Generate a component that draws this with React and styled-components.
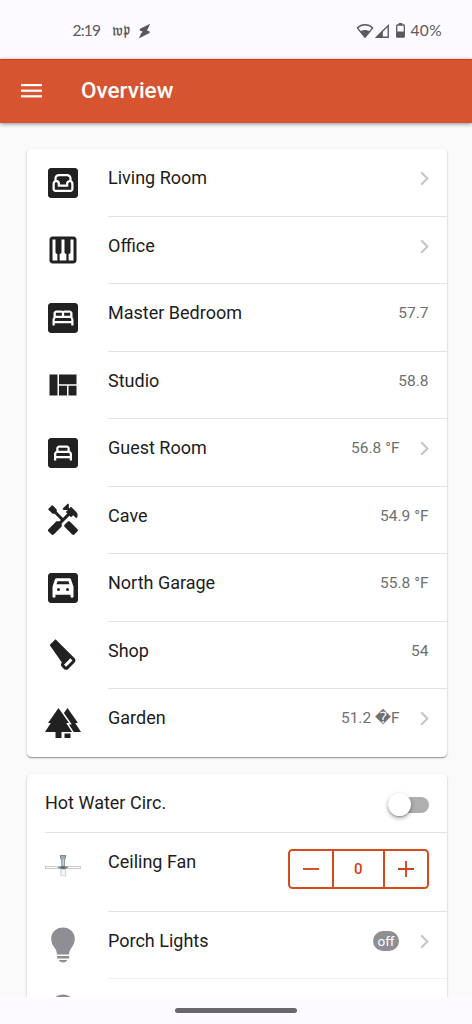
import React from "react";
import styled, { createGlobalStyle } from "styled-components";
import {
  MdLiving,
  MdPiano,
  MdBedroomParent,
  MdBedroomChild,
  MdViewQuilt,
  MdHandyman,
  MdGarage,
  MdCarpenter,
  MdForest,
} from "react-icons/md";

const GlobalStyle = createGlobalStyle`
  * { box-sizing: border-box; }
  body { margin: 0; background: #fafafa; }
`;

const Screen = styled.div`
  width: 472px;
  height: 1024px;
  display: flex;
  flex-direction: column;
  overflow: hidden;
  background: #fafafa;
  font-family: Roboto, "Liberation Sans", sans-serif;
  color: #1c1c1c;
`;

const StatusBar = styled.div`
  flex: none;
  height: 59px;
  padding: 2px 30px 0 72.5px;
  display: flex;
  align-items: center;
  background: #fdfbff;
  color: #5b595d;
  font-family: Lato, Roboto, sans-serif;
  font-size: 15.5px;
`;

const Clock = styled.span`
  width: 39.5px;
  padding-bottom: 1px;
  letter-spacing: -0.75px;
`;

const PostMark = styled.span`
  width: 26px;
  padding-bottom: 2px;
  font-family: "DejaVu Sans", "DejaVu Math TeX Gyre", serif;
  font-size: 15px;
  line-height: 16px;
  letter-spacing: -1px;
  white-space: nowrap;
  transform: scaleX(0.72);
  transform-origin: left center;
`;

const StatusIcons = styled.div`
  margin-left: auto;
  display: flex;
  align-items: center;
`;

const WifiIcon = styled.svg`
  width: 18px;
  height: 16px;
  margin-right: 1px;
`;

const BatteryIcon = styled.svg`
  width: 9px;
  height: 15px;
  margin: 0 5px 1px 7px;
`;

const BatteryText = styled.span`
  padding-bottom: 1px;
  letter-spacing: 0.4px;
`;

const AppBar = styled.header`
  flex: none;
  height: 64px;
  padding: 0 20px 2px;
  display: flex;
  align-items: center;
  border-top: 1px solid #c9420f;
  background: #d6542f;
  color: #fff;
  box-shadow: 0 1px 4px rgba(0, 0, 0, 0.45);
  z-index: 1;
`;

const AppTitle = styled.h1`
  margin: 0 0 1px 38px;
  font-size: 22.5px;
  font-weight: 500;
  line-height: 28px;
`;

const Content = styled.main`
  flex: 1;
  min-height: 0;
  overflow: hidden;
  padding: 26px 25.5px 0 27px;
  display: flex;
  flex-direction: column;
  gap: 17.5px;
`;

const Card = styled.section`
  flex: none;
  border-radius: 4.5px;
  background: #fff;
  box-shadow: 0 1px 1px rgba(0, 0, 0, 0.32), 0 1px 3px rgba(0, 0, 0, 0.16);
`;

const Row = styled.div`
  height: ${(p) => p.$height || 67.5}px;
  padding-left: 18px;
  display: flex;
`;

const Media = styled.div`
  width: 63px;
  padding-top: ${(p) => p.$top || 15.75}px;
  flex: none;
  color: #212121;

  svg {
    display: block;
  }
`;

const Inner = styled.div`
  flex: 1;
  display: flex;
  align-items: flex-start;
  padding-right: 18px;
  border-bottom: ${(p) => (p.$last ? "0" : `1px solid ${p.$faint ? "#f0f0f0" : "#e3e3e3"}`)};
`;

const Title = styled.span`
  flex: 1;
  font-size: 18px;
  line-height: 57px;
`;

const Value = styled.span`
  font-size: 15.5px;
  line-height: 58px;
  color: #6f6f6f;
`;

const Diamond = styled.span`
  font-family: "DejaVu Sans", sans-serif;
  font-size: 15.5px;
  line-height: 1;
`;

const ArrowIcon = styled.svg`
  flex: none;
  display: block;
  width: 9px;
  height: 15px;
  margin: 22px 0 0 20px;
`;

const Badge = styled.span`
  height: 20px;
  min-width: 26px;
  margin: 19px 0.5px 0 0;
  padding: 0 4px;
  border-radius: 10px;
  background: #8e8e93;
  color: #fff;
  font-size: 13.5px;
  line-height: 20px;
  text-align: center;
`;

const Switch = styled.div`
  width: 40.5px;
  height: 16px;
  margin-top: 22.5px;
  display: flex;
  align-items: center;
  border-radius: 8px;
  background: #b0afb0;
`;

const Knob = styled.div`
  width: 23px;
  height: 23px;
  border-radius: 50%;
  background: #fff;
  box-shadow: 0 2px 4px rgba(0, 0, 0, 0.38), 0 1px 1px rgba(0, 0, 0, 0.14);
`;

const Stepper = styled.div`
  width: 140.5px;
  height: 40px;
  margin-top: 16.25px;
  display: grid;
  grid-template-columns: 41.5px 1fr 41.5px;
  border: 2px solid #d64a20;
  border-radius: 4.5px;
  color: #d23f12;
`;

const StepButton = styled.button`
  display: flex;
  align-items: center;
  justify-content: center;
  padding: 0;
  border: 0;
  background: none;
  color: inherit;
`;

const StepValue = styled.div`
  border: solid #d64a20;
  border-width: 0 2px;
  font-size: 15px;
  font-weight: 500;
  line-height: 36px;
  text-align: center;
`;

const GestureArea = styled.footer`
  flex: none;
  height: 27.5px;
  padding-top: 11px;
  background: #fdfbff;
`;

const GestureBar = styled.div`
  width: 122px;
  height: 5px;
  margin-left: 175px;
  border-radius: 2.5px;
  background: #69676b;
`;

const Arrow = () => (
  <ArrowIcon viewBox="0 0 9 15">
    <path d="M1.2 1.2 7.4 7.5 1.2 13.8" fill="none" stroke="#c4c4c6" strokeWidth="2" />
  </ArrowIcon>
);

const Bulb = () => (
  <svg width="36" height="36" viewBox="0 0 36 36" fill="#8e8e93">
    <path d="M18 .5C11.2.5 6.2 5.4 6.2 11.7c0 4 1.7 6.8 3.5 9.3 1.5 2.1 2.200 3.700 2.200 6.500h12.200c0-2.800.7-4.400 2.200-6.500 1.800-2.500 3.500-5.300 3.500-9.300C29.800 5.400 24.800.5 18 .5Z" />
    <rect x="12" y="29" width="12.2" height="2.4" rx="0.6" />
    <path d="M13.8 33h8.5c-.6 1.5-2.2 2.4-4.2 2.4S14.4 34.5 13.8 33Z" />
  </svg>
);

const CeilingFan = () => (
  <svg width="36" height="36" viewBox="0 0 36 36">
    <rect x="0.5" y="12.5" width="14" height="2" fill="#fafafa" stroke="#bdbdbd" strokeWidth="0.8" />
    <rect x="21.5" y="12.5" width="14" height="2" fill="#fafafa" stroke="#bdbdbd" strokeWidth="0.8" />
    <path d="M15.8 15.5h4.800v6.500l-5-.6Z" fill="#f4f4f6" stroke="#c6c6c8" strokeWidth="0.7" />
    <path d="M15.300 1.500h5.400l-.8 4h-3.800Z" fill="#a3abbb" stroke="#7d8494" strokeWidth="1" />
    <rect x="16.200" y="5.500" width="3.800" height="7" fill="#8f97a8" />
    <rect x="17.500" y="5" width="1.300" height="6.500" fill="#d5dae5" />
    <path d="M12.500 13.500 16 12h4l3.500 1.500-3 1.500h-5Z" fill="#7e8696" />
    <rect x="16.400" y="12.700" width="3.200" height="1.800" fill="#5a6273" />
  </svg>
);

const Bolt = () => (
  <svg width="14" height="16" viewBox="0 0 14 16" fill="#5b595d">
    <path d="M12.200.8 2 5.800 1.600 7.600 4.600 8.600 2.800 11 .8 15.400 11.500 10 11.800 8.600 9 7.600Z" />
  </svg>
);

const Wifi = () => (
  <WifiIcon viewBox="0 0 18 16">
    <path d="M1.300 4.900C5.600.7 12.400.7 16.700 4.900L9 14.200Z" fill="none" stroke="#5b595d" strokeWidth="1.400" strokeLinejoin="round" />
    <path d="M4.200 8.400C7 6.400 11 6.400 13.800 8.400L9 14.200Z" fill="#5b595d" />
  </WifiIcon>
);

const Signal = () => (
  <svg width="14" height="14" viewBox="0 0 14 14">
    <path d="M1.600 13.200 13.200 1.600v11.600Z" fill="none" stroke="#5b595d" strokeWidth="1.400" />
    <path d="M.5 13.800 7.800 6.500v7.300Z" fill="#5b595d" />
  </svg>
);

const Battery = () => (
  <BatteryIcon viewBox="0 0 9 15">
    <rect x="2.7" y="0" width="3.6" height="2" fill="#5b595d" />
    <rect x=".7" y="2" width="7.6" height="12.2" rx=".7" fill="none" stroke="#5b595d" strokeWidth="1.3" />
    <rect x="1" y="8.5" width="7" height="5.5" fill="#5b595d" />
  </BatteryIcon>
);

const Menu = () => (
  <svg width="23" height="16" viewBox="0 0 23 16" fill="#fff">
    <rect x="1" y="1" width="21" height="2.2" />
    <rect x="1" y="6.6" width="21" height="2.2" />
    <rect x="1" y="12.2" width="21" height="2.2" />
  </svg>
);

const rooms = [
  { name: "Living Room", icon: MdLiving, arrow: true },
  { name: "Office", icon: MdPiano, arrow: true },
  { name: "Master Bedroom", icon: MdBedroomParent, value: "57.7" },
  { name: "Studio", icon: MdViewQuilt, value: "58.8" },
  { name: "Guest Room", icon: MdBedroomChild, value: "56.8 °F", arrow: true },
  { name: "Cave", icon: MdHandyman, value: "54.9 °F" },
  { name: "North Garage", icon: MdGarage, value: "55.8 °F" },
  { name: "Shop", icon: MdCarpenter, value: "54" },
  { name: "Garden", icon: MdForest, value: <>51.2 <Diamond>{"\uFFFD"}</Diamond>F</>, arrow: true },
];

export default function App() {
  return (
    <Screen>
      <GlobalStyle />
      <StatusBar>
        <Clock>2:19</Clock>
        <PostMark>{"\u{1D59C}\u{1D595}"}</PostMark>
        <Bolt />
        <StatusIcons>
          <Wifi />
          <Signal />
          <Battery />
          <BatteryText>40%</BatteryText>
        </StatusIcons>
      </StatusBar>
      <AppBar>
        <Menu />
        <AppTitle>Overview</AppTitle>
      </AppBar>
      <Content>
        <Card>
          {rooms.map(({ name, icon: Icon, value, arrow }, i) => (
            <Row key={name}>
              <Media>
                <Icon size={36} />
              </Media>
              <Inner $last={i === rooms.length - 1}>
                <Title>{name}</Title>
                {value && <Value>{value}</Value>}
                {arrow && <Arrow />}
              </Inner>
            </Row>
          ))}
        </Card>
        <Card>
          <Row $height={58.5}>
            <Inner>
              <Title>Hot Water Circ.</Title>
              <Switch>
                <Knob />
              </Switch>
            </Inner>
          </Row>
          <Row $height={79}>
            <Media $top={21}>
              <CeilingFan />
            </Media>
            <Inner>
              <Title>Ceiling Fan</Title>
              <Stepper>
                <StepButton aria-label="Decrease">
                  <svg width="18" height="18" viewBox="0 0 18 18">
                    <path d="M1 9h16" stroke="currentColor" strokeWidth="1.8" />
                  </svg>
                </StepButton>
                <StepValue>0</StepValue>
                <StepButton aria-label="Increase">
                  <svg width="18" height="18" viewBox="0 0 18 18">
                    <path d="M1 9h16M9 1v16" stroke="currentColor" strokeWidth="1.8" />
                  </svg>
                </StepButton>
              </Stepper>
            </Inner>
          </Row>
          <Row $height={67}>
            <Media>
              <Bulb />
            </Media>
            <Inner $faint>
              <Title>Porch Lights</Title>
              <Badge>off</Badge>
              <Arrow />
            </Inner>
          </Row>
          <Row>
            <Media>
              <Bulb />
            </Media>
            <Inner />
          </Row>
        </Card>
      </Content>
      <GestureArea>
        <GestureBar />
      </GestureArea>
    </Screen>
  );
}
